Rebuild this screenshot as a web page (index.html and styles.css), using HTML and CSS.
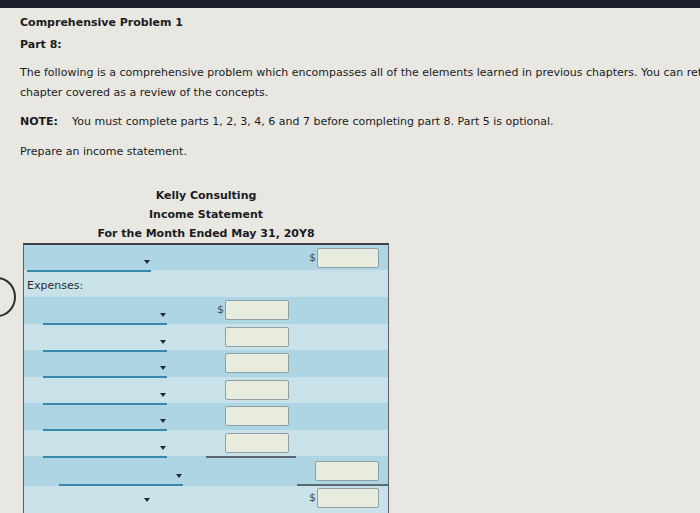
FILE: index.html
```html
<!DOCTYPE html>
<html>
<head>
<meta charset="utf-8">
<link rel="stylesheet" href="styles.css">
</head>
<body>
<div class="topbar"></div>
<div class="page">
  <div class="title">Comprehensive Problem 1</div>
  <div class="title">Part 8:</div>
  <p class="para">The following is a comprehensive problem which encompasses all of the elements learned in previous chapters. You can refer to the<br>chapter covered as a review of the concepts.</p>
  <p class="note"><b class="note-label">NOTE:</b>You must complete parts 1, 2, 3, 4, 6 and 7 before completing part 8. Part 5 is optional.</p>
  <p class="prep">Prepare an income statement.</p>

  <div class="heading">
    <div>Kelly Consulting</div>
    <div>Income Statement</div>
    <div>For the Month Ended May 31, 20Y8</div>
  </div>

  <div class="sheet">
    <div class="row blue row-a">
      <div class="c1"><div class="dd"><span class="arr"></span></div></div>
      <div class="c2"></div>
      <div class="c3"><span class="dol">$</span><span class="inp"></span></div>
    </div>
    <div class="row light row-b">
      <div class="c1 label">Expenses:</div>
      <div class="c2"></div>
      <div class="c3"></div>
    </div>
    <div class="row blue row-c">
      <div class="c1 ind1"><div class="dd"><span class="arr"></span></div></div>
      <div class="c2"><span class="dol">$</span><span class="inp"></span></div>
      <div class="c3"></div>
    </div>
    <div class="row light row-c">
      <div class="c1 ind1"><div class="dd"><span class="arr"></span></div></div>
      <div class="c2"><span class="dol"></span><span class="inp"></span></div>
      <div class="c3"></div>
    </div>
    <div class="row blue row-c">
      <div class="c1 ind1"><div class="dd"><span class="arr"></span></div></div>
      <div class="c2"><span class="dol"></span><span class="inp"></span></div>
      <div class="c3"></div>
    </div>
    <div class="row light row-c">
      <div class="c1 ind1"><div class="dd"><span class="arr"></span></div></div>
      <div class="c2"><span class="dol"></span><span class="inp"></span></div>
      <div class="c3"></div>
    </div>
    <div class="row blue row-c">
      <div class="c1 ind1"><div class="dd"><span class="arr"></span></div></div>
      <div class="c2"><span class="dol"></span><span class="inp"></span></div>
      <div class="c3"></div>
    </div>
    <div class="row light row-c">
      <div class="c1 ind1"><div class="dd"><span class="arr"></span></div></div>
      <div class="c2 sum"><span class="dol"></span><span class="inp"></span></div>
      <div class="c3"></div>
    </div>
    <div class="row blue row-d">
      <div class="c1 ind2"><div class="dd"><span class="arr"></span></div></div>
      <div class="c2"></div>
      <div class="c3 sum"><span class="dol"></span><span class="inp"></span></div>
    </div>
    <div class="row light row-e">
      <div class="c1"><div class="dd dd-open"><span class="arr"></span></div></div>
      <div class="c2"></div>
      <div class="c3"><span class="dol">$</span><span class="inp"></span></div>
    </div>
  </div>
</div>
<div class="radio"></div>
</body>
</html>
```

FILE: styles.css
```css
html, body {
  margin: 0;
  padding: 0;
}
body {
  width: 700px;
  height: 513px;
  overflow: hidden;
  background: #e8e7e1;
  font-family: "DejaVu Sans", Verdana, sans-serif;
  font-size: 11px;
  color: #1a1c1f;
  position: relative;
}
.topbar {
  height: 8px;
  background: #1b1f29;
}
.page {
  padding: 4px 0 0 20px;
  white-space: nowrap;
  overflow: hidden;
}
.title {
  font-weight: bold;
  line-height: 22px;
}
.para {
  margin: 7px 0 0 0;
  line-height: 20px;
}
.note {
  margin: 9px 0 0 0;
  line-height: 20px;
}
.note-label {
  margin-right: 14px;
}
.prep {
  margin: 10px 0 0 0;
  line-height: 20px;
}
.heading {
  margin: 24px 0 0 3px;
  width: 366px;
  text-align: center;
  font-weight: bold;
  line-height: 19px;
}
.sheet {
  margin-left: 3px;
  width: 364px;
  border-top: 2px solid #3b4045;
  border-left: 1px solid #5a6065;
  border-right: 1px solid #5a6065;
}
.row {
  display: grid;
  grid-template-columns: 180px 93px 91px;
  align-items: start;
}
.blue { background: #aed5e4; }
.light { background: #c9e2e9; }
.row-a { height: 25px; }
.row-b { height: 27px; }
.row-c { height: 26.5px; }
.row-d { height: 30px; }
.row-e { height: 30px; }

.c1 {
  padding-left: 3px;
  height: 100%;
  box-sizing: border-box;
}
.ind1 { padding-left: 19px; }
.ind2 { padding-left: 35px; }
.label {
  padding-top: 9px;
  color: #2a2d30;
}
.dd {
  width: 123px;
  height: 18px;
  margin-top: 2px;
  border-bottom: 2px solid #3a88ad;
  display: flex;
  justify-content: flex-end;
  align-items: flex-end;
  padding: 0 1px 6px 0;
  box-sizing: content-box;
}
.row-d .dd { margin-top: 4px; }
.row-a .dd { height: 17px; }
.row-e .dd {
  border-bottom-color: transparent;
  height: 14px;
  padding-bottom: 0;
}
.arr {
  width: 0;
  height: 0;
  border-left: 3px solid transparent;
  border-right: 3px solid transparent;
  border-top: 4px solid #1f2a33;
}
.c2, .c3 {
  display: flex;
  align-items: center;
  height: 26px;
  box-sizing: border-box;
  padding-top: 3px;
  align-self: start;
}
.c2 { padding-left: 13px; }
.c3 { padding-left: 12px; }
.dol {
  width: 8px;
  color: #3f4d55;
  font-size: 11px;
  line-height: 20px;
  align-self: flex-start;
}
.inp {
  display: block;
  height: 20px;
  box-sizing: border-box;
  background: #e7ecdf;
  border: 1px solid #8e9fa3;
  border-radius: 2px;
  align-self: flex-start;
}
.c2 .inp { width: 64px; }
.c3 .inp { width: 62px; }
.c2.sum {
  border-bottom: 2px solid #5a6a70;
  height: 28px;
  margin-left: 2px;
  width: 90px;
  padding-left: 11px;
}
.row-d .c3 {
  padding-top: 5px;
  padding-left: 10px;
}
.row-d .c3 .inp { width: 64px; }
.c3.sum {
  border-bottom: 2px solid #5a6a70;
  height: 30px;
}
.row-e .c3 { padding-top: 2px; }
.radio {
  position: absolute;
  left: -22px;
  top: 277px;
  width: 34px;
  height: 36px;
  border: 2px solid #2b2e31;
  border-radius: 50%;
}
```
